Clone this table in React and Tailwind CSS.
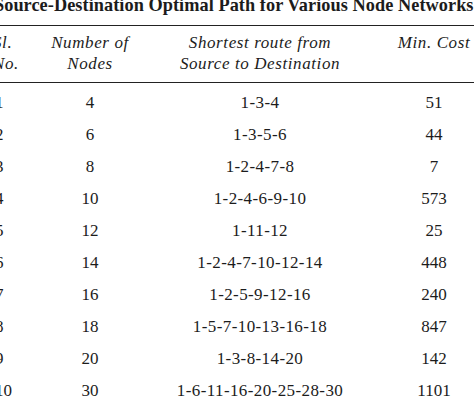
const ROWS = [
  ['1', '4', '1-3-4', '51'],
  ['2', '6', '1-3-5-6', '44'],
  ['3', '8', '1-2-4-7-8', '7'],
  ['4', '10', '1-2-4-6-9-10', '573'],
  ['5', '12', '1-11-12', '25'],
  ['6', '14', '1-2-4-7-10-12-14', '448'],
  ['7', '16', '1-2-5-9-12-16', '240'],
  ['8', '18', '1-5-7-10-13-16-18', '847'],
  ['9', '20', '1-3-8-14-20', '142'],
  ['10', '30', '1-6-11-16-20-25-28-30', '1101'],
];

const serif = { fontFamily: '"Liberation Serif", "Times New Roman", serif' };

export default function App() {
  return (
    <div className="w-[474px] h-[413px] overflow-hidden bg-white text-[#1c1c1c]" style={serif}>
      <div className="w-[524px] -ml-[22px]">
        {/* Caption, cut off at the top */}
        <div className="-mt-[5px] h-[30px] pl-[16px] text-[18.3px] font-bold leading-[20px] tracking-[0.05px] whitespace-nowrap">
          Source-Destination Optimal Path for Various Node Networks
        </div>

        <div className="border-t-[1.5px] border-[#222]" />

        {/* Header */}
        <div className="grid grid-cols-[48px_128px_212px_136px] pt-[6px] pb-[8px] italic text-[17px] leading-[21px] tracking-[0.6px] border-b-[1.5px] border-[#222]">
          <div className="pl-[15px]">Sl.<br />No.</div>
          <div className="text-center">Number of<br />Nodes</div>
          <div className="text-center">Shortest route from<br />Source to Destination</div>
          <div className="text-center">Min. Cost</div>
        </div>

        {/* Body */}
        <div className="pt-[3px] text-[17px]">
          {ROWS.map((r) => (
            <div key={r[0]} className="grid grid-cols-[48px_128px_212px_136px] h-[32px] items-center leading-none text-[#1c1c1c]">
              <div className="pl-[17px]">{r[0]}</div>
              <div className="text-center">{r[1]}</div>
              <div className="text-center tracking-[0.4px]">{r[2]}</div>
              <div className="text-center">{r[3]}</div>
            </div>
          ))}
        </div>
      </div>
    </div>
  );
}
